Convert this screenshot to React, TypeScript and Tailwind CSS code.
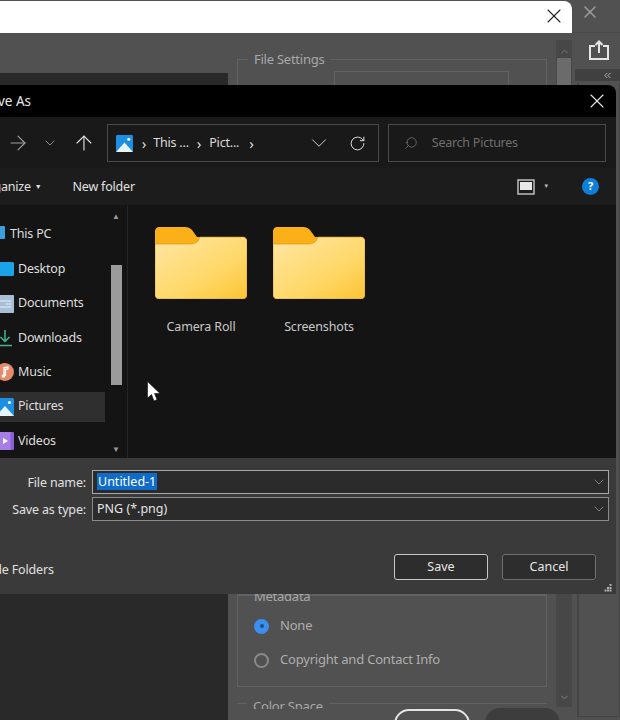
import React from "react";
import { ArrowRight, ArrowUp, ChevronDown, RotateCw, Search, X, ChevronUp, ChevronsLeft } from "lucide-react";

const F = "font-['Noto_Sans','Open_Sans',sans-serif]";

function FolderIcon({ id }: { id: string }) {
  return (
    <svg width="92" height="72" viewBox="0 0 92 72">
      <defs>
        <linearGradient id={id} x1="0.1" y1="0.1" x2="0.9" y2="1">
          <stop offset="0" stopColor="#ffe49a" />
          <stop offset="0.6" stopColor="#ffd868" />
          <stop offset="1" stopColor="#fcc63a" />
        </linearGradient>
      </defs>
      <path d="M4 0H30C33 0 35 1 37 3L42 10H88C90 10 92 12 92 14V68C92 70 90 72 88 72H4C2 72 0 70 0 68V4C0 2 2 0 4 0Z" fill="#fbb017" />
      <path d="M0 17H36C39 17 41 16 43 14L45 10H88C90 10 92 12 92 14V68C92 70 90 72 88 72H4C2 72 0 70 0 68Z" fill={`url(#${id})`} stroke="#c9921f" strokeWidth="0.6" />
    </svg>
  );
}

function PicturesIcon({ size = 18 }: { size?: number }) {
  return (
    <svg width={size} height={size} viewBox="0 0 18 18" className="shrink-0">
      <rect width="18" height="18" rx="1.5" fill="#1d8fe3" />
      <path d="M0 18L9 8L18 18Z" fill="#e6f4fc" />
      <circle cx="13.5" cy="4.5" r="1.6" fill="#fff" />
    </svg>
  );
}

function NavIcon({ kind }: { kind: string }) {
  if (kind === "pc")
    return (
      <svg width="15" height="18" viewBox="0 0 15 18" className="shrink-0">
        <rect width="15" height="13" rx="1" fill="#3aa0dc" />
        <rect x="5" y="13" width="5" height="4" fill="#2f79b0" />
      </svg>
    );
  if (kind === "desktop")
    return (
      <svg width="18" height="14" viewBox="0 0 18 14" className="shrink-0">
        <rect width="18" height="14" rx="1.5" fill="#19a3e8" />
      </svg>
    );
  if (kind === "docs")
    return (
      <svg width="17" height="18" viewBox="0 0 17 18" className="shrink-0">
        <rect width="17" height="18" rx="1" fill="#a9bfd6" />
        <path d="M3 6H14M9 9H14M3 12H14" stroke="#e8eef5" strokeWidth="1.2" />
      </svg>
    );
  if (kind === "down")
    return (
      <svg width="16" height="18" viewBox="0 0 16 18" fill="none" className="shrink-0">
        <path d="M8 1V12M3.5 8L8 12.5L12.5 8" stroke="#3fb68e" strokeWidth="1.5" />
        <path d="M1 16.5H15" stroke="#3fb68e" strokeWidth="1.5" />
      </svg>
    );
  if (kind === "music")
    return (
      <svg width="18" height="18" viewBox="0 0 18 18" className="shrink-0">
        <circle cx="9" cy="9" r="9" fill="#e58a6a" />
        <path d="M8 12.5V4.5L12 4V6L9.5 6.4V13" stroke="#fff" strokeWidth="1.3" fill="none" />
        <circle cx="7.5" cy="13" r="1.8" fill="#fff" />
      </svg>
    );
  if (kind === "pics") return <PicturesIcon />;
  return (
    <svg width="18" height="18" viewBox="0 0 18 18" className="shrink-0">
      <rect width="18" height="18" rx="1" fill="#8b5ed8" />
      <rect x="3.5" y="0" width="11" height="18" fill="#a57fe6" />
      <path d="M7 6L12 9L7 12Z" fill="#fff" />
    </svg>
  );
}

const navItems = [
  { kind: "desktop", label: "Desktop" },
  { kind: "docs", label: "Documents" },
  { kind: "down", label: "Downloads" },
  { kind: "music", label: "Music" },
  { kind: "pics", label: "Pictures", active: true },
  { kind: "video", label: "Videos" },
];

function Field({ label, children, selected }: { label: string; children: React.ReactNode; selected?: boolean }) {
  return (
    <div className="flex items-center h-[24px]">
      <div className="w-[116px] shrink-0 text-right pr-[6px] pt-[2px] text-[12.5px] tracking-[-0.15px] text-[#e0e0e0]">{label}</div>
      <div className={`flex items-center justify-between w-[517px] h-[24px] bg-[#2b2b2b] border ${selected ? "border-[#a8a8a8]" : "border-[#8a8a8a]"} pl-[4px] pr-[1px] text-[12.5px] text-[#e4e4e4]`}>
        <span className="pt-[1px]">{children}</span>
        <ChevronDown size={16} strokeWidth={1.1} className="text-[#a0a0a0]" />
      </div>
    </div>
  );
}

export default function App() {
  return (
    <div className={`relative w-[620px] h-[720px] overflow-hidden bg-[#515151] ${F}`}>
      {/* Background application */}
      <div className="flex h-[33px]">
        <div className="flex items-center justify-end w-[572px] h-[32px] mt-[1px] bg-white rounded-tr-[8px] pr-[6px] pb-[3px]">
          <X size={24} strokeWidth={1.1} className="text-[#222]" />
        </div>
        <div className="flex-1 flex items-start pl-[8px] pt-[2px] border-b border-[#484848]">
          <X size={20} strokeWidth={1.9} className="text-[#9a9a9a]" />
        </div>
      </div>
      <div className="flex h-[687px]">
        <div className="w-[228px] pt-[40px]">
          <div className="h-[647px] bg-[#292929]" />
        </div>
        <div className="w-[344px] flex flex-col">
          <div className="flex h-[676px] shrink-0">
            <div className="flex-1 overflow-hidden pl-[9px] pr-[9px] pt-[26px]">
              <div className="relative h-[536px] border border-[#626262]">
                <span className="absolute -top-[10px] left-[10px] px-[6px] bg-[#515151] text-[13px] tracking-[-0.25px] leading-[18px] text-[#a8a8a8]">File Settings</span>
                <div className="ml-[96px] mt-[11px] w-[175px] h-[30px] border border-[#626262]" />
              </div>
              <div className="relative h-[92px] border border-[#626262]">
                <span className="absolute -top-[9px] left-[16px] text-[13px] leading-[18px] tracking-[-0.25px] text-[#a8a8a8]">Metadata</span>
                <div className="flex flex-col gap-[16px] pl-[16px] pt-[21px]">
                  <div className="flex items-center gap-[11px] h-[18px]">
                    <span className="flex items-center justify-center w-[15px] h-[15px] rounded-full bg-[#3b8ff0]">
                      <span className="w-[4px] h-[4px] rounded-full bg-[#284a70]" />
                    </span>
                    <span className="text-[13px] tracking-[-0.2px] text-[#aeaeae]">None</span>
                  </div>
                  <div className="flex items-center gap-[11px] h-[18px]">
                    <span className="w-[15px] h-[15px] rounded-full border-2 border-[#8a8a8a]" />
                    <span className="text-[13px] tracking-[-0.2px] text-[#aeaeae]">Copyright and Contact Info</span>
                  </div>
                </div>
              </div>
              <div className="relative mt-[16px] border-t border-[#626262]">
                <span className="absolute -top-[7px] left-[10px] px-[6px] bg-[#515151] text-[13px] leading-[18px] tracking-[-0.2px] text-[#a8a8a8]">Color Space</span>
              </div>
            </div>
            <div className="w-[16px] h-[667px] mt-[7px] bg-[#474747] flex flex-col items-center">
              <ChevronUp size={11} className="text-[#7a7a7a] mt-[6px] shrink-0" />
              <div className="w-[14px] h-[480px] mt-[1px] bg-[#6b6b6b]" />
              <ChevronDown size={11} className="text-[#8a8a8a] mt-auto mb-[4px] shrink-0" />
            </div>
          </div>
          <div className="flex items-start gap-[15px] pl-[166px] h-[11px] z-10 bg-[#515151]">
            <div className="shrink-0 w-[76px] h-[30px] rounded-[15px] border-2 border-[#e4e4e4]" />
            <div className="shrink-0 -mt-[1px] w-[75px] h-[30px] rounded-[15px] bg-[#3d3d3d]" />
          </div>
        </div>
        <div className="flex-1 flex flex-col">
          <div className="flex justify-center pt-[7px] pb-[9px] pl-[6px]">
            <svg width="22" height="20" viewBox="0 0 22 20" fill="none" stroke="#e6e6e6" strokeWidth="2">
              <path d="M7 6H2V19H20V6H15M11 13V2M7.5 5L11 1.5L14.5 5" />
            </svg>
          </div>
          <div className="flex justify-end items-center h-[12px] ml-[3px] bg-[#404040] pr-[7px]">
            <ChevronsLeft size={11} className="text-[#b8b8b8]" />
          </div>
          <div className="mt-[2px] ml-[5px] h-[634px] border-l-2 border-r border-b border-[#444]" />
        </div>
      </div>

      {/* Save As dialog */}
      <div className="absolute left-[-24px] top-[85px] w-[640px] h-[509px] flex flex-col rounded-tr-[8px] overflow-hidden">
        <div className="flex items-center justify-between h-[32px] bg-black pl-[24px] pr-[7px]">
          <span className="-ml-[24px] pl-[7px] text-[13.5px] text-[#e8e8e8]"><span className="opacity-0">Sa</span>ve As</span>
          <X size={24} strokeWidth={1.1} className="text-[#e8e8e8]" />
        </div>
        <div className="flex items-center h-[51px] bg-[#191919] pt-[1px] pl-[30px] pr-[10px]">
          <ArrowRight size={24} strokeWidth={1.1} className="text-[#a0a0a0]" />
          <ChevronDown size={16} strokeWidth={1.3} className="ml-[12px] text-[#a0a0a0]" />
          <ArrowUp size={24} strokeWidth={1.1} className="ml-[14px] text-[#e6e6e6]" />
          <div className="flex items-center w-[273px] h-[38px] ml-[11px] border border-[#4a4a4a] pl-[8px] pr-[12px] text-[12.5px] tracking-[-0.2px] text-[#dcdcdc]">
            <PicturesIcon size={17} />
            <span className="ml-[9px] text-[15px] leading-none">›</span>
            <span className="ml-[7px]">This ...</span>
            <span className="ml-[8px] text-[15px] leading-none">›</span>
            <span className="ml-[8px]">Pict...</span>
            <span className="ml-[10px] text-[15px] leading-none">›</span>
            <ChevronDown size={26} strokeWidth={0.9} className="ml-auto -mr-[2px] text-[#d0d0d0]" />
            <RotateCw size={17} strokeWidth={1.4} className="ml-[19px] text-[#e0e0e0]" />
          </div>
          <div className="flex items-center w-[219px] h-[38px] ml-[9px] border border-[#4a4a4a] pl-[15px] text-[12.5px] tracking-[-0.25px] text-[#6f6f6f]">
            <Search size={14} strokeWidth={1.3} className="-scale-x-100 text-[#7a7a7a]" />
            <span className="ml-[14px]">Search Pictures</span>
          </div>
        </div>
        <div className="flex items-center h-[37px] bg-[#1c1c1c] pt-[2px] pl-[3px] pr-[17px] text-[12.5px] tracking-[-0.2px] text-[#e0e0e0]">
          <span>Organize</span>
          <span className="ml-[4px] text-[7px]">▼</span>
          <span className="ml-[31px]">New folder</span>
          <svg width="18" height="16" viewBox="0 0 18 16" className="ml-auto mb-[2px]" fill="none">
            <rect x="1" y="1" width="16" height="14" stroke="#bdbdbd" strokeWidth="1.5" />
            <rect x="3" y="3" width="12" height="8" fill="#e8e8e8" />
          </svg>
          <span className="ml-[8px] mb-[2px] text-[6px] text-[#bdbdbd]">▼</span>
          <span className="ml-[33px] mb-[2px] flex items-center justify-center w-[17px] h-[17px] rounded-full bg-[#0f7ed8] text-[11px] font-bold text-white">?</span>
        </div>
        <div className="flex h-[253px] bg-[#141414]">
          <div className="relative flex w-[152px] pt-[12px] border-r border-[#252525] pr-[22px]">
            <div className="flex-1">
              <div className="flex items-center gap-[5px] h-[35px] pl-[14px] text-[12.5px] tracking-[-0.2px] text-[#dedede]">
                <NavIcon kind="pc" />
                <span>This PC</span>
              </div>
              {navItems.map((n) => (
                <div key={n.label} className="flex items-center h-[34.4px]">
                  <div className={`flex items-center gap-[4px] w-full h-[30px] pl-[20px] text-[12.5px] tracking-[-0.2px] text-[#dedede] ${n.active ? "bg-[#2f2f2f]" : ""}`}>
                    <span className="flex justify-center w-[18px]"><NavIcon kind={n.kind} /></span>
                    <span>{n.label}</span>
                  </div>
                </div>
              ))}
            </div>
            <div className="absolute right-[5px] top-0 bottom-0 w-[12px] flex flex-col items-center justify-between pt-[7px] pb-[5px]">
              <span className="text-[8px] leading-[8px] text-[#9a9a9a]">▲</span>
              <div className="absolute top-[60px] h-[120px] w-[11px] bg-[#9b9b9b]" />
              <span className="text-[8px] leading-[8px] text-[#9a9a9a]">▼</span>
            </div>
          </div>
          <div className="flex gap-[26px] pl-[27px] pt-[22px]">
            {[["Camera Roll", "f1"], ["Screenshots", "f2"]].map(([label, id]) => (
              <div key={id} className="flex flex-col items-center w-[92px]">
                <FolderIcon id={id} />
                <span className="mt-[19px] text-[12.5px] tracking-[-0.15px] leading-[18px] text-[#c8c8c8]">{label}</span>
              </div>
            ))}
          </div>
        </div>
        <div className="relative flex-1 bg-[#3a3a3a] pt-[12px]">
          <div className="flex flex-col gap-[3px]">
            <Field label="File name:" selected>
              <span className="bg-[#0f6cc8] text-white text-[12.5px] leading-[18px] px-[1px]">Untitled-1</span>
            </Field>
            <Field label="Save as type:">
              <span>PNG (*.png)</span>
            </Field>
          </div>
          <div className="flex items-center mt-[33px] pr-[20px]">
            <span className="pl-[6px] pt-[6px] text-[12.5px] tracking-[-0.15px] text-[#e0e0e0]">Hide Folders</span>
            <div className="flex items-center justify-center ml-auto w-[94px] h-[26px] border border-[#c8c8c8] rounded-[3px] bg-[#2d2d2d] text-[12.5px] text-[#e6e6e6]">Save</div>
            <div className="flex items-center justify-center ml-[14px] w-[94px] h-[26px] border border-[#6f6f6f] rounded-[3px] bg-[#2d2d2d] text-[12.5px] text-[#e6e6e6]">Cancel</div>
          </div>
          <svg width="8" height="8" viewBox="0 0 8 8" className="absolute right-[4px] bottom-[2px]" fill="#b0b0b0">
            <rect x="5.5" y="0" width="2" height="2" />
            <rect x="3" y="3" width="2" height="2" />
            <rect x="5.5" y="3" width="2" height="2" />
            <rect x="0.5" y="5.5" width="2" height="2" />
            <rect x="3" y="5.5" width="2" height="2" />
            <rect x="5.5" y="5.5" width="2" height="2" />
          </svg>
        </div>
      </div>

      {/* Pointer */}
      <svg width="14" height="21" viewBox="0 0 14 21" className="absolute left-[147px] top-[381px]">
        <path d="M0.5 0.5V17L4.5 13.5L7 20L10 18.5L7.5 12.5H13Z" fill="#fff" stroke="#111" strokeWidth="0.6" />
      </svg>
    </div>
  );
}
